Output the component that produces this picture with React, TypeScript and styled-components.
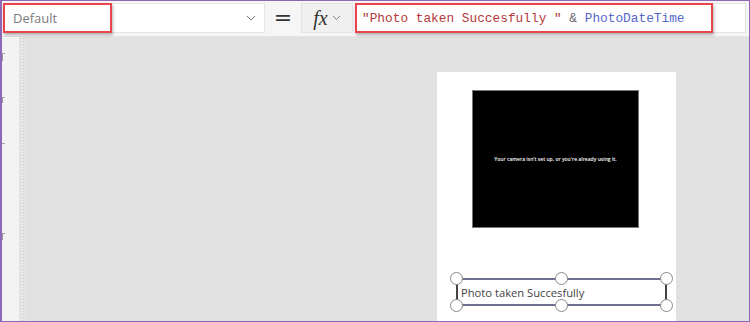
import React from "react";
import styled, { createGlobalStyle } from "styled-components";

const Global = createGlobalStyle`
  html, body { margin: 0; padding: 0; background: #ffffff; }
  * { box-sizing: border-box; }
`;

const Frame = styled.div`
  width: 750px;
  height: 322px;
  border: 1px solid #8e67b9;
  border-left-width: 2px;
  display: flex;
  flex-direction: column;
  overflow: hidden;
  font-family: "Open Sans", "Noto Sans", sans-serif;
`;

const Toolbar = styled.div`
  height: 36px;
  flex: none;
  background: #f6f6f6;
  border-bottom: 1px solid #e4e4e4;
  display: flex;
  align-items: center;
  padding: 2px 3px 3px 1px;
`;

const Highlight = styled.div<{ $w: number }>`
  position: absolute;
  left: -1px;
  top: -1px;
  bottom: -1px;
  width: ${(p) => p.$w}px;
  border: 2px solid #e8454d;
  box-shadow: 1px 2px 3px rgba(0, 0, 0, 0.3);
  pointer-events: none;
`;

const Dropdown = styled.div`
  position: relative;
  width: 262px;
  height: 30px;
  background: #fff;
  border: 1px solid #e6e6e6;
  display: flex;
  align-items: center;
  justify-content: space-between;
  padding: 0 8px 0 9px;
  color: #7a7a7a;
  font-size: 13px;
`;

const Equals = styled.div`
  width: 36px;
  text-align: center;
  font-size: 22px;
  font-weight: 400;
  color: #333;
  font-family: "DejaVu Sans", sans-serif;
  line-height: 1;
`;

const FxButton = styled.div`
  width: 52px;
  height: 30px;
  background: #f0f0f0;
  border: 1px solid #e3e3e3;
  display: flex;
  align-items: center;
  justify-content: center;
  gap: 4px;
  font-family: "Liberation Serif", serif;
  font-style: italic;
  font-size: 20px;
  color: #333;
`;

const Formula = styled.div`
  position: relative;
  flex: 1;
  margin-left: 2px;
  height: 30px;
  background: #fff;
  border: 1px solid #e3e3e3;
  display: flex;
  align-items: center;
  padding-left: 6px;
  font-family: "Liberation Mono", monospace;
  font-size: 12.8px;
  white-space: pre;
`;

const Tok = styled.span<{ $c: string }>`
  color: ${(p) => p.$c};
`;

const Body = styled.div`
  flex: 1;
  display: flex;
  min-height: 0;
`;

const Rail = styled.div`
  width: 17px;
  background: #f3f3f3;
  position: relative;
`;

const RailMark = styled.div<{ $t: number; $w: number; $h: number }>`
  position: absolute;
  left: 0;
  top: ${(p) => p.$t}px;
  width: ${(p) => p.$w}px;
  height: ${(p) => p.$h}px;
  border-left: 1px solid #777;
  border-top: 1px solid #888;
  opacity: 0.7;
`;

const Dots = styled.div`
  width: 6px;
  background-color: #e6e6e6;
  background-image: radial-gradient(#cfcfcf 0.8px, transparent 0.9px);
  background-size: 3px 3px;
`;

const Canvas = styled.div`
  flex: 1;
  background: #e1e1e1;
  padding: 35px 0 0 412px;
  display: flex;
  align-items: flex-start;
`;

const Screen = styled.div`
  position: relative;
  width: 239px;
  height: 260px;
  background: #fff;
  padding: 18px 0 0 35px;
`;

const Camera = styled.div`
  width: 167px;
  height: 138px;
  background: #000;
  border: 1px solid #777;
  display: flex;
  align-items: center;
  justify-content: center;
  color: #fff;
  font-size: 5px;
  font-weight: 600;
  font-family: "Open Sans", sans-serif;
`;

const Label = styled.div`
  position: absolute;
  left: 19px;
  top: 206px;
  width: 211px;
  height: 28px;
  border-top: 2px solid #6f6f92;
  border-bottom: 2px solid #6f6f92;
  border-left: 2px solid #444;
  border-right: 2px solid #444;
  display: flex;
  align-items: center;
  padding-left: 3px;
  font-size: 11.2px;
  color: #444;
`;

const Handle = styled.div<{ $x: number; $y: number }>`
  position: absolute;
  left: ${(p) => p.$x}px;
  top: ${(p) => p.$y}px;
  width: 13px;
  height: 13px;
  margin: -6.5px 0 0 -6.5px;
  border-radius: 50%;
  background: #fff;
  border: 1px solid #8a8a8a;
`;

const Chevron = ({ size = 10 }: { size?: number }) => (
  <svg width={size} height={size * 0.6} viewBox="0 0 10 6">
    <path d="M1 1l4 4 4-4" fill="none" stroke="#777" strokeWidth="1" />
  </svg>
);

const handles = [
  [0, 0],
  [105, 0],
  [210, 0],
  [0, 27],
  [105, 27],
  [210, 27],
];

export default function App() {
  return (
    <>
      <Global />
      <Frame>
        <Toolbar>
          <Dropdown>
            <span>Default</span>
            <Chevron />
            <Highlight $w={109} />
          </Dropdown>
          <Equals>=</Equals>
          <FxButton>
            <span>fx</span>
            <Chevron size={9} />
          </FxButton>
          <Formula>
            <Tok $c="#b4373b">"Photo taken Succesfully "</Tok>
            <Tok $c="#666"> & </Tok>
            <Tok $c="#5567c7">PhotoDateTime</Tok>
            <Highlight $w={358} />
          </Formula>
        </Toolbar>
        <Body>
          <Rail>
            <RailMark $t={16} $w={3} $h={8} />
            <RailMark $t={60} $w={3} $h={6} />
            <RailMark $t={106} $w={3} $h={1} />
            <RailMark $t={196} $w={3} $h={7} />
          </Rail>
          <Dots />
          <Canvas>
            <Screen>
              <Camera>Your camera isn't set up, or you're already using it.</Camera>
              <Label>
                Photo taken Succesfully
                {handles.map(([x, y], i) => (
                  <Handle key={i} $x={x - 2} $y={y - 2} />
                ))}
              </Label>
            </Screen>
          </Canvas>
        </Body>
      </Frame>
    </>
  );
}
